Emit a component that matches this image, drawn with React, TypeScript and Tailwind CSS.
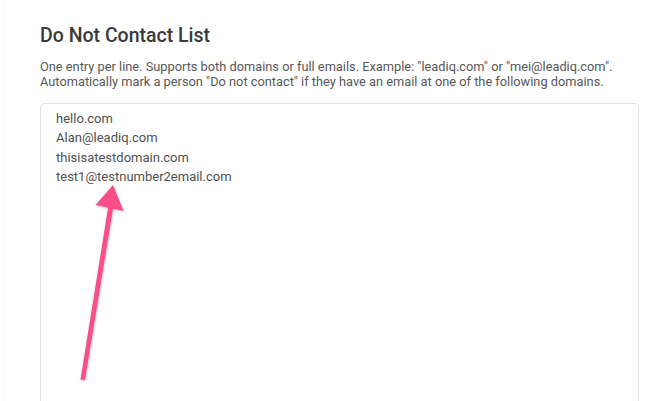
import React from "react";

const entries = [
  "hello.com",
  "Alan@leadiq.com",
  "thisisatestdomain.com",
  "test1@testnumber2email.com",
];

function PointerArrow() {
  return (
    <svg
      className="absolute left-0 top-0 pointer-events-none"
      width="653"
      height="401"
      viewBox="0 0 653 401"
    >
      <defs>
        <filter id="arrowShadow" x="-20%" y="-20%" width="140%" height="140%">
          <feDropShadow dx="0.5" dy="1" stdDeviation="1" floodColor="#000" floodOpacity="0.25" />
        </filter>
      </defs>
      <g filter="url(#arrowShadow)" fill="#f74f86" stroke="none">
        <path d="M80.5 379.5 L108.5 205 L113.5 205.7 L85 380 Z" />
        <path d="M113 185 L95.5 205 L123.5 211 Z" />
      </g>
    </svg>
  );
}

export default function App() {
  return (
    <div
      className="relative w-[653px] h-[401px] overflow-hidden bg-white"
      style={{ fontFamily: "Roboto, 'Liberation Sans', sans-serif" }}
    >
      <div className="absolute left-[4px] top-0 h-full w-px bg-[#f2f2f2]" />
      <div className="pl-[40px] pr-[14px] pt-[23px]">
        <h2 className="text-[19.5px] leading-[26px] font-medium text-[#3a3a3a]">
          Do Not Contact List
        </h2>
        <p className="mt-[11px] text-[12.8px] leading-[14.5px] text-[#585858]">
          One entry per line. Supports both domains or full emails. Example: "leadiq.com" or "mei@leadiq.com".
          <br />
          Automatically mark a person "Do not contact" if they have an email at one of the following domains.
        </p>
        <div className="mt-[14px] h-[320px] rounded-[4px] border border-[#e3e3e3] px-[15px] pt-[5px]">
          {entries.map((e) => (
            <div key={e} className="text-[13px] leading-[19.3px] text-[#505050]">
              {e}
            </div>
          ))}
        </div>
      </div>
      <PointerArrow />
    </div>
  );
}
